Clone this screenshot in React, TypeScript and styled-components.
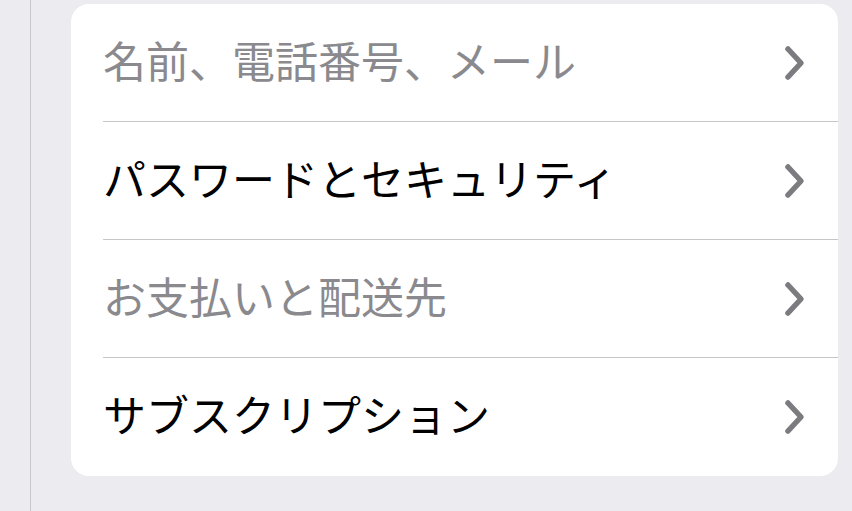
import styled, { createGlobalStyle } from 'styled-components';

const GlobalStyle = createGlobalStyle`
  html, body {
    margin: 0;
    padding: 0;
    background: #ebebf0;
  }
  body {
    font-family: "Noto Sans CJK JP", "Noto Sans", sans-serif;
  }
`;

const Page = styled.div`
  display: flex;
  height: 511px;
  overflow: hidden;
`;

const Sidebar = styled.div`
  width: 30px;
  flex-shrink: 0;
  border-right: 1px solid #c7c7cc;
`;

const Content = styled.div`
  flex: 1;
  padding: 4px 14px 0 40px;
`;

const Card = styled.ul`
  list-style: none;
  margin: 0;
  padding: 0;
  background: #ffffff;
  border-radius: 18px;
  overflow: hidden;
`;

const Row = styled.li`
  padding-left: 32px;
`;

const RowInner = styled.div<{ $last?: boolean }>`
  height: 117px;
  display: flex;
  align-items: center;
  justify-content: space-between;
  padding-right: 32px;
  border-bottom: 1px solid ${(p) => (p.$last ? 'transparent' : '#c6c6c8')};
`;

const Label = styled.span<{ $dimmed?: boolean }>`
  font-size: 43px;
  line-height: 1;
  padding-bottom: 6px;
  color: ${(p) => (p.$dimmed ? '#8a8a8e' : '#000000')};
`;

function Chevron() {
  return (
    <svg width="22" height="36" viewBox="0 0 22 36" fill="none">
      <path
        d="M4 4 L17 18 L4 32"
        stroke="#7b7b80"
        strokeWidth="5.5"
        strokeLinecap="round"
        strokeLinejoin="round"
      />
    </svg>
  );
}

const items = [
  { label: '名前、電話番号、メール', dimmed: true },
  { label: 'パスワードとセキュリティ', dimmed: false },
  { label: 'お支払いと配送先', dimmed: true },
  { label: 'サブスクリプション', dimmed: false },
];

export default function App() {
  return (
    <>
      <GlobalStyle />
      <Page>
        <Sidebar />
        <Content>
          <Card>
            {items.map((item, i) => (
              <Row key={item.label}>
                <RowInner $last={i === items.length - 1}>
                  <Label $dimmed={item.dimmed}>{item.label}</Label>
                  <Chevron />
                </RowInner>
              </Row>
            ))}
          </Card>
        </Content>
      </Page>
    </>
  );
}
